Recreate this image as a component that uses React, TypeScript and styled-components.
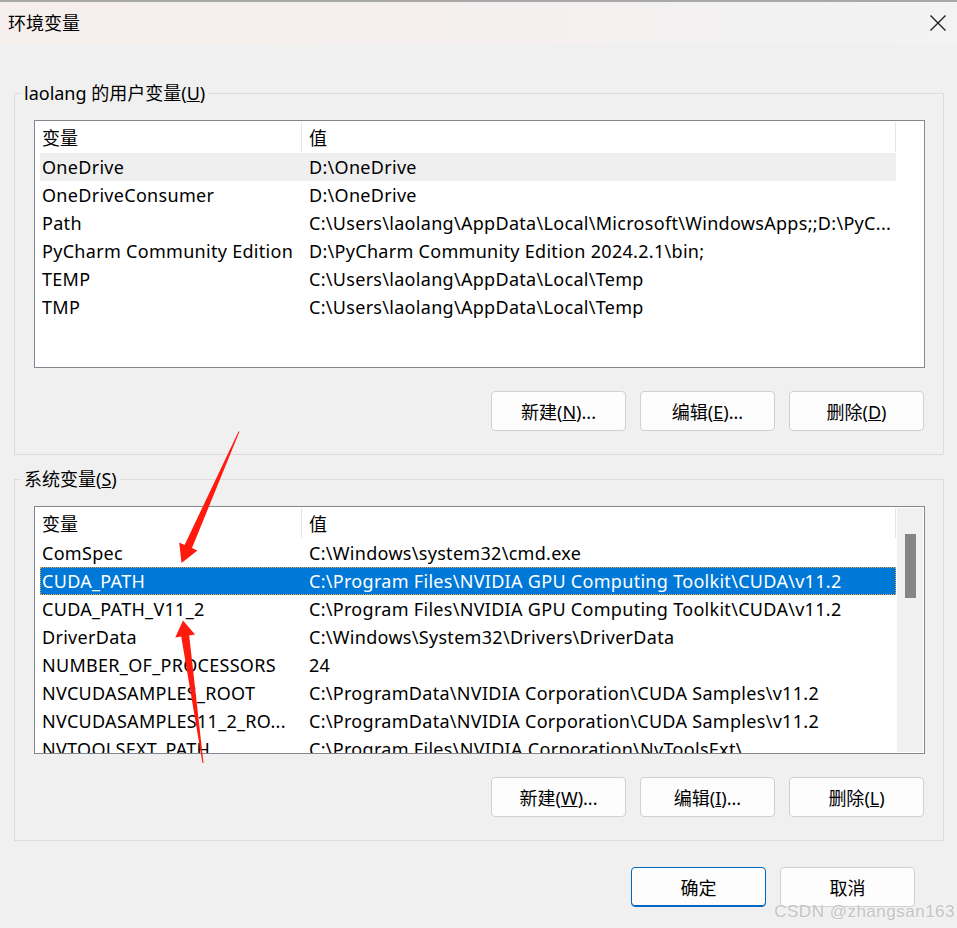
import React, { FC } from "react";
import styled, { createGlobalStyle, css } from "styled-components";

type Variable = [string, string];

const userVars: Variable[] = [
  ["OneDrive", "D:\\OneDrive"],
  ["OneDriveConsumer", "D:\\OneDrive"],
  ["Path", "C:\\Users\\laolang\\AppData\\Local\\Microsoft\\WindowsApps;;D:\\PyC..."],
  ["PyCharm Community Edition", "D:\\PyCharm Community Edition 2024.2.1\\bin;"],
  ["TEMP", "C:\\Users\\laolang\\AppData\\Local\\Temp"],
  ["TMP", "C:\\Users\\laolang\\AppData\\Local\\Temp"],
];

const systemVars: Variable[] = [
  ["ComSpec", "C:\\Windows\\system32\\cmd.exe"],
  ["CUDA_PATH", "C:\\Program Files\\NVIDIA GPU Computing Toolkit\\CUDA\\v11.2"],
  ["CUDA_PATH_V11_2", "C:\\Program Files\\NVIDIA GPU Computing Toolkit\\CUDA\\v11.2"],
  ["DriverData", "C:\\Windows\\System32\\Drivers\\DriverData"],
  ["NUMBER_OF_PROCESSORS", "24"],
  ["NVCUDASAMPLES_ROOT", "C:\\ProgramData\\NVIDIA Corporation\\CUDA Samples\\v11.2"],
  ["NVCUDASAMPLES11_2_RO...", "C:\\ProgramData\\NVIDIA Corporation\\CUDA Samples\\v11.2"],
  ["NVTOOLSEXT_PATH", "C:\\Program Files\\NVIDIA Corporation\\NvToolsExt\\"],
];

const GlobalStyle = createGlobalStyle`
  html, body {
    margin: 0;
    padding: 0;
    background: #f0f0f0;
  }
  body {
    font-family: "Noto Sans", "Noto Sans CJK SC", sans-serif;
    font-size: 18px;
    color: #000;
  }
  * {
    box-sizing: border-box;
  }
`;

const Window = styled.div`
  position: relative;
  width: 957px;
  height: 928px;
  overflow: hidden;
  background: #f0f0f0;
`;

const TitleBar = styled.div`
  height: 44px;
  display: flex;
  align-items: center;
  justify-content: space-between;
  padding: 0 11px 0 8px;
  border-top: 2px solid #a8a8a8;
  background: linear-gradient(90deg, #f5eeec 0%, #f4f0ef 55%, #f3f2f2 80%, #f3f3f3 100%);
`;

const Title = styled.div`
  font-size: 18px;
  line-height: 24px;
`;

const Body = styled.div`
  padding: 37px 13px 0 14px;
`;

const Group = styled.fieldset`
  margin: 0 0 12px;
  padding: 0;
  min-width: 0;
  border: 1px solid #dcdcdc;
`;

const Legend = styled.legend`
  margin-left: 6px;
  padding: 0 3px;
  font-size: 18px;
  line-height: 24px;
`;

const GroupInner = styled.div`
  padding: 15px 18px 23px 19px;
`;

const ListBox = styled.div`
  height: 248px;
  display: flex;
  padding: 1px 1px 1px 5px;
  border: 1px solid #828790;
  background: #fff;
  overflow: hidden;
`;

const Table = styled.div`
  width: 856px;
  flex: none;
`;

const HeaderRow = styled.div`
  height: 31px;
  display: grid;
  grid-template-columns: 262px 594px;
`;

const HeaderCell = styled.div`
  display: flex;
  align-items: center;
  padding-left: 2px;
  height: 30px;
  border-right: 1px solid #e5e5e5;

  & + & {
    padding-left: 7px;
  }
`;

const Row = styled.div<{ $state?: "hover" | "selected" }>`
  height: 28px;
  display: grid;
  grid-template-columns: 262px 594px;
  align-items: center;
  white-space: nowrap;
  letter-spacing: 0.3px;

  ${(p) =>
    p.$state === "hover" &&
    css`
      background: #efefef;
    `}

  ${(p) =>
    p.$state === "selected" &&
    css`
      background: #0078d7;
      color: #fff;
      outline: 1px dotted #f7a23b;
      outline-offset: -1px;
    `}
`;

const Cell = styled.div`
  overflow: hidden;
  padding-left: 2px;

  & + & {
    padding-left: 7px;
  }
`;

const ScrollBar = styled.div`
  width: 26px;
  margin-left: auto;
  background: #f0f0f0;
  padding: 26px 0 0 8px;
`;

const Thumb = styled.div`
  width: 11px;
  height: 64px;
  background: #858585;
`;

const ButtonRow = styled.div`
  display: flex;
  justify-content: flex-end;
  gap: 14px;
  margin-top: 23px;
  padding-right: 1px;
`;

const Button = styled.button<{ $primary?: boolean }>`
  width: 135px;
  height: 40px;
  border: 1px solid #d0d0d0;
  border-radius: 4px;
  background: #fdfdfd;
  font-family: inherit;
  font-size: 18px;
  color: #000;
  padding: 0;

  ${(p) =>
    p.$primary &&
    css`
      border-color: #0067c0;
      box-shadow: inset 0 -1px 0 #0067c0;
    `}
`;

const Footer = styled.div`
  display: flex;
  justify-content: flex-end;
  gap: 14px;
  margin-top: 26px;
  padding-right: 29px;
`;

const Watermark = styled.div`
  position: absolute;
  right: 2px;
  bottom: 6px;
  font-family: "Liberation Sans", Arial, sans-serif;
  font-size: 17px;
  color: #c4c4c4;
  letter-spacing: 0.5px;
  text-shadow: 0 0 2px #fff;
`;

const Annotations = styled.svg`
  position: absolute;
  left: 0;
  top: 0;
  pointer-events: none;
`;

interface IVarList {
  items: Variable[];
  hover?: number;
  selected?: number;
  scroll?: boolean;
}

const VarList: FC<IVarList> = ({ items, hover, selected, scroll }) => (
  <ListBox>
    <Table>
      <HeaderRow>
        <HeaderCell>变量</HeaderCell>
        <HeaderCell>值</HeaderCell>
      </HeaderRow>
      {items.map(([name, value], i) => (
        <Row key={name} $state={i === selected ? "selected" : i === hover ? "hover" : undefined}>
          <Cell>{name}</Cell>
          <Cell>{value}</Cell>
        </Row>
      ))}
    </Table>
    {scroll && (
      <ScrollBar>
        <Thumb />
      </ScrollBar>
    )}
  </ListBox>
);

const Key: FC<{ k: string }> = ({ k }) => (
  <>
    (<u>{k}</u>)
  </>
);

const App: FC = () => (
  <Window>
    <GlobalStyle />
    <TitleBar>
      <Title>环境变量</Title>
      <svg width="16" height="16" viewBox="0 0 16 16">
        <path d="M0.5 0.5 L15.5 15.5 M15.5 0.5 L0.5 15.5" stroke="#1b1b1b" strokeWidth="1.3" />
      </svg>
    </TitleBar>
    <Body>
      <Group>
        <Legend>
          laolang 的用户变量<Key k="U" />
        </Legend>
        <GroupInner>
          <VarList items={userVars} hover={0} />
          <ButtonRow>
            <Button>新建<Key k="N" />...</Button>
            <Button>编辑<Key k="E" />...</Button>
            <Button>删除<Key k="D" /></Button>
          </ButtonRow>
        </GroupInner>
      </Group>
      <Group>
        <Legend>
          系统变量<Key k="S" />
        </Legend>
        <GroupInner>
          <VarList items={systemVars} selected={1} scroll />
          <ButtonRow>
            <Button>新建<Key k="W" />...</Button>
            <Button>编辑<Key k="I" />...</Button>
            <Button>删除<Key k="L" /></Button>
          </ButtonRow>
        </GroupInner>
      </Group>
      <Footer>
        <Button $primary>确定</Button>
        <Button>取消</Button>
      </Footer>
    </Body>
    <Watermark>CSDN @zhangsan163</Watermark>
    <Annotations width="957" height="928" viewBox="0 0 957 928">
      <polygon
        points="239.5,431.5 192,548.1 197.4,550.5 181.5,563 179.2,542.5 184.6,544.9 238.5,431.5"
        fill="#ff1a0d"
      />
      <polygon
        points="203.5,763 189.2,635.4 195,634.6 183,620.5 175.3,637.4 181.2,636.6 202.5,763"
        fill="#ff1a0d"
      />
    </Annotations>
  </Window>
);

export default App;
